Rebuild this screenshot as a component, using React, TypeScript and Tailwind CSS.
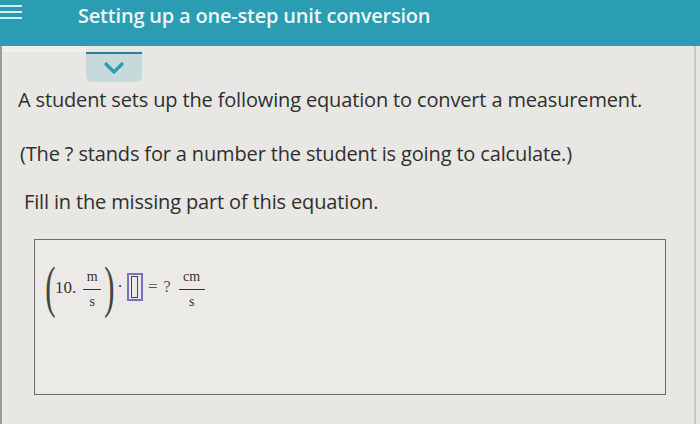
const Fraction = ({ top, bottom, width }: { top: string; bottom: string; width: string }) => (
  <span className={`inline-flex flex-col items-center ${width}`}>
    <span className="text-[14px] leading-[16px]">{top}</span>
    <span className="w-full h-px bg-[#333] my-[4px]" />
    <span className="text-[14px] leading-[16px]">{bottom}</span>
  </span>
);

const Paren = ({ ch }: { ch: string }) => (
  <span className="w-[10px] flex justify-center">
    <span className="text-[56px] leading-[60px] font-light text-[#444] scale-x-[0.55]">{ch}</span>
  </span>
);

export default function App() {
  return (
    <div className="w-[700px] h-[424px] overflow-hidden bg-[#e8e7e3] flex flex-col" style={{ fontFamily: '"Open Sans", sans-serif' }}>
      <header className="h-[46px] bg-[#2a9db2] flex items-start shrink-0">
        <div className="w-[26px] pt-[5px] flex flex-col gap-[4px]">
          <span className="h-[2px] w-[22px] bg-[#d9f0f4]" />
          <span className="h-[2px] w-[22px] bg-[#d9f0f4]" />
          <span className="h-[2px] w-[22px] bg-[#d9f0f4]" />
        </div>
        <h1 className="ml-[52px] mt-[1px] text-[20px] font-semibold text-[#eef6f8] tracking-[-0.2px]">
          Setting up a one-step unit conversion
        </h1>
      </header>

      <div className="flex-1 flex border-l-2 border-[#9a9a98] border-r-2 border-r-[#c9c9c6] mr-[4px]">
        <div className="flex-1 flex flex-col">
          <div className="h-[6px] flex">
            <div className="w-[84px] bg-[#f0efec]" />
          </div>
          <div className="ml-[84px] w-[56px] h-[30px] bg-[#c7dadb] rounded-b-[6px] border-t-2 border-[#1f8597] flex items-center justify-center">
            <svg width="24" height="14" viewBox="0 0 24 14">
              <path d="M4 3 L12 11 L20 3" stroke="#2a9db2" strokeWidth="3.2" fill="none" strokeLinecap="round" strokeLinejoin="round" />
            </svg>
          </div>

          <div className="pl-[16px] text-[#2f2f2f] text-[20px] tracking-[-0.15px]">
            <p className="mt-[5px] leading-[26px]">A student sets up the following equation to convert a measurement.</p>
            <p className="mt-[28px] leading-[26px] pl-[2px]">(The ? stands for a number the student is going to calculate.)</p>
            <p className="mt-[22px] leading-[26px] pl-[6px]">Fill in the missing part of this equation.</p>
          </div>

          <div className="ml-[32px] mr-[28px] mt-[24px] h-[156px] border border-[#6b6b6b] bg-[#ebeae7] pl-[10px] pt-[17px]">
            <div className="flex items-center text-[#333]" style={{ fontFamily: '"Liberation Serif", serif' }}>
              <Paren ch="(" />
              <span className="text-[17px] ml-[0px] mt-[2px]">10.</span>
              <span className="ml-[7px]"><Fraction top="m" bottom="s" width="w-[18px]" /></span>
              <span className="ml-[3px]"><Paren ch=")" /></span>
              <span className="text-[17px] ml-[3px]">·</span>
              <span className="ml-[4px] w-[16px] h-[28px] border-2 border-[#7a70c8] flex items-center justify-center">
                <span className="w-[7px] h-[22px] border border-[#444]" />
              </span>
              <span className="ml-[5px] text-[17px] text-[#555]">=</span>
              <span className="ml-[6px] text-[16px] text-[#555]">?</span>
              <span className="ml-[8px]"><Fraction top="cm" bottom="s" width="w-[26px]" /></span>
            </div>
          </div>
        </div>
      </div>
    </div>
  );
}
